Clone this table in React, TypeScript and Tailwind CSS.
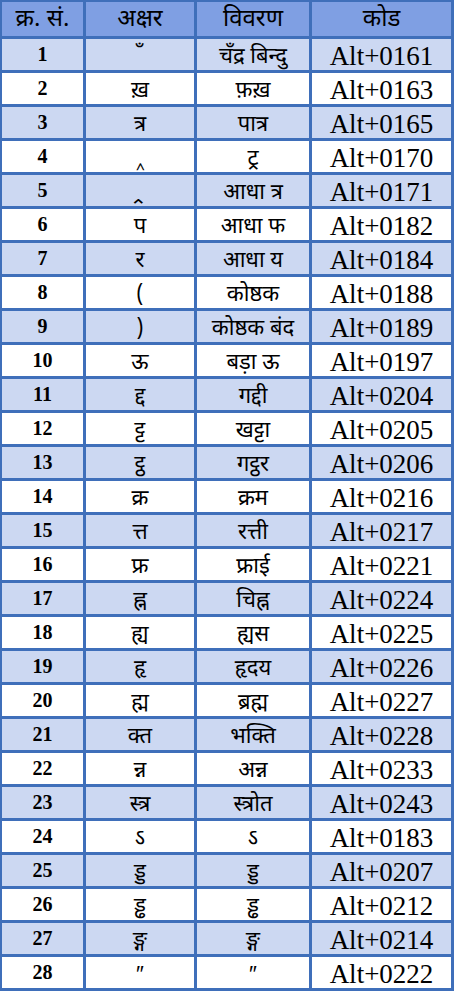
import React from 'react';

const rows: [string, string, string][] = [
  ['\u00a0ँ', 'चँद्र बिन्दु', 'Alt+0161'],
  ['ख़', 'फ़ख़', 'Alt+0163'],
  ['त्र', 'पात्र', 'Alt+0165'],
  ['‸', 'ट्र', 'Alt+0170'],
  ['\u00a0्र', 'आधा त्र', 'Alt+0171'],
  ['प', 'आधा फ', 'Alt+0182'],
  ['र', 'आधा य', 'Alt+0184'],
  ['(', 'कोष्ठक', 'Alt+0188'],
  [')', 'कोष्ठक बंद', 'Alt+0189'],
  ['ऊ', 'बड़ा ऊ', 'Alt+0197'],
  ['द्द', 'गद्दी', 'Alt+0204'],
  ['ट्ट', 'खट्टा', 'Alt+0205'],
  ['ट्ठ', 'गट्ठर', 'Alt+0206'],
  ['क्र', 'क्रम', 'Alt+0216'],
  ['त्त', 'रत्ती', 'Alt+0217'],
  ['फ्र', 'फ्राई', 'Alt+0221'],
  ['ह्न', 'चिह्न', 'Alt+0224'],
  ['ह्य', 'ह्यस', 'Alt+0225'],
  ['हृ', 'हृदय', 'Alt+0226'],
  ['ह्म', 'ब्रह्म', 'Alt+0227'],
  ['क्त', 'भक्ति', 'Alt+0228'],
  ['न्न', 'अन्न', 'Alt+0233'],
  ['स्त्र', 'स्त्रोत', 'Alt+0243'],
  ['ऽ', 'ऽ', 'Alt+0183'],
  ['ड्ड', 'ड्ड', 'Alt+0207'],
  ['ड्ढ', 'ड्ढ', 'Alt+0212'],
  ['ङ्ग', 'ङ्ग', 'Alt+0214'],
  ['″', '″', 'Alt+0222'],
];

const hindi = "font-['Noto_Sans_Devanagari','Lohit_Devanagari','Mangal',sans-serif]";

export default function App() {
  return (
    <div className="w-[454px] h-[992px] bg-white">
      <div className="grid grid-cols-[81px_108px_112px_139px] grid-rows-[34px_repeat(28,31px)] gap-[3px] bg-[#3f6fba] pt-[2px] pl-[2px] pr-[3px] pb-[3px] text-black">
        {/* header */}
        {['क्र. सं.', 'अक्षर', 'विवरण', 'कोड'].map((h) => (
          <div key={h} className={`bg-[#7f9fe3] flex items-center justify-center pt-[2px] text-[24px] leading-none ${hindi}`}>
            {h}
          </div>
        ))}

        {rows.map(([letter, desc, code], i) => {
          const bg = i % 2 === 0 ? 'bg-[#ccd8f2]' : 'bg-white';
          return (
            <React.Fragment key={code + i}>
              <div className={`${bg} flex justify-center pt-[5px] font-['Liberation_Serif',serif] font-bold text-[20px] leading-none`}>
                {i + 1}
              </div>
              <div className={`${bg} flex items-end justify-center pb-[1px] text-[22px] leading-none ${hindi}`}>
                {letter}
              </div>
              <div className={`${bg} flex items-end justify-center pb-[1px] text-[22px] leading-none ${hindi}`}>
                {desc}
              </div>
              <div className={`${bg} flex items-center justify-center pt-[3px] font-['Liberation_Serif',serif] text-[27px] leading-none`}>
                {code}
              </div>
            </React.Fragment>
          );
        })}
      </div>
    </div>
  );
}
